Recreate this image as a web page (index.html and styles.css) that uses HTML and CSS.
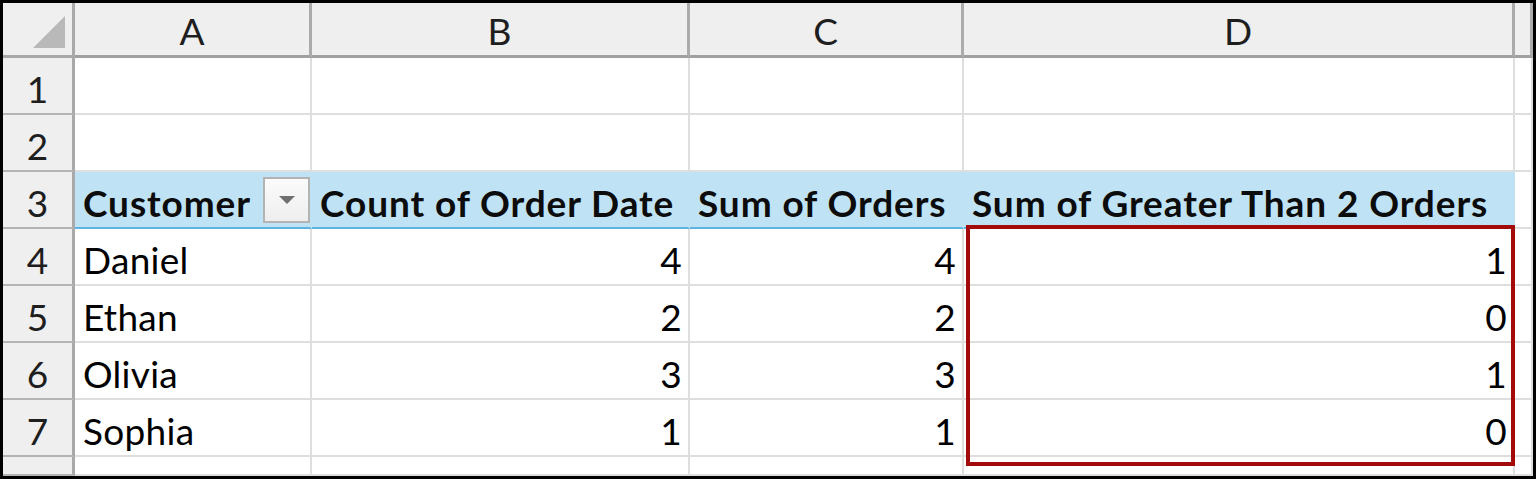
FILE: index.html
```html
<!DOCTYPE html>
<html lang="en">
<head>
    <meta charset="UTF-8">
    <title>Pivot Table - Sum of Greater Than 2 Orders</title>
    <link rel="stylesheet" href="styles.css">
</head>
<body>
    <div class="sheet">
        <div class="grid">
            <!-- column headers -->
            <div class="corner"><span class="corner-tri"></span></div>
            <div class="col-head">A</div>
            <div class="col-head">B</div>
            <div class="col-head">C</div>
            <div class="col-head">D</div>
            <div class="col-head"></div>

            <!-- row 1 -->
            <div class="row-head">1</div>
            <div class="cell"></div><div class="cell"></div><div class="cell"></div><div class="cell"></div><div class="cell"></div>

            <!-- row 2 -->
            <div class="row-head">2</div>
            <div class="cell"></div><div class="cell"></div><div class="cell"></div><div class="cell"></div><div class="cell"></div>

            <!-- row 3: pivot header -->
            <div class="row-head">3</div>
            <div class="cell pivot-head row-label">
                <span>Customer</span>
                <span class="filter-btn"><span class="filter-arrow"></span></span>
            </div>
            <div class="cell pivot-head">Count of Order Date</div>
            <div class="cell pivot-head">Sum of Orders</div>
            <div class="cell pivot-head">Sum of Greater Than 2 Orders</div>
            <div class="cell"></div>

            <!-- data rows -->
            <div class="row-head">4</div>
            <div class="cell">Daniel</div>
            <div class="cell num">4</div>
            <div class="cell num">4</div>
            <div class="cell num">1</div>
            <div class="cell"></div>

            <div class="row-head">5</div>
            <div class="cell">Ethan</div>
            <div class="cell num">2</div>
            <div class="cell num">2</div>
            <div class="cell num">0</div>
            <div class="cell"></div>

            <div class="row-head">6</div>
            <div class="cell">Olivia</div>
            <div class="cell num">3</div>
            <div class="cell num">3</div>
            <div class="cell num">1</div>
            <div class="cell"></div>

            <div class="row-head">7</div>
            <div class="cell">Sophia</div>
            <div class="cell num">1</div>
            <div class="cell num">1</div>
            <div class="cell num">0</div>
            <div class="cell"></div>

            <!-- partial row 8 -->
            <div class="row-head"></div>
            <div class="cell"></div><div class="cell"></div><div class="cell"></div><div class="cell"></div><div class="cell"></div>
        </div>

        <!-- annotation box round column D values -->
        <div class="highlight"></div>
    </div>
</body>
</html>
```

FILE: styles.css
```css
* {
    box-sizing: border-box;
}
body {
    margin: 0;
    background-color: #fff;
    font-family: Lato, "Open Sans", sans-serif;
    color: #000;
}
.sheet {
    position: relative;
    width: 1536px;
    height: 479px;
    border: 3px solid #000;
    overflow: hidden;
}
.grid {
    display: grid;
    grid-template-columns: 72px 237px 378px 274px 551px 1fr;
    grid-template-rows: 55px repeat(7, 57px) 1fr;
    height: 100%;
    font-size: 37px;
}
.corner {
    background-color: #efefef;
    border-right: 3px solid #a9a9a9;
    border-bottom: 3px solid #a9a9a9;
    display: flex;
    align-items: flex-end;
    justify-content: flex-end;
    padding: 0 7px 7px 0;
}
.corner-tri {
    width: 0;
    height: 0;
    border-left: 32px solid transparent;
    border-bottom: 32px solid #b9b9b9;
}
.col-head {
    background-color: #efefef;
    border-right: 3px solid #ababab;
    border-bottom: 3px solid #a0a0a0;
    display: flex;
    align-items: center;
    justify-content: center;
    padding-top: 3px;
    color: #1e1e1e;
}
.row-head {
    background-color: #efefef;
    border-right: 3px solid #a9a9a9;
    border-bottom: 2px solid #b4b4b4;
    display: flex;
    align-items: center;
    justify-content: center;
    padding-top: 6px;
    color: #1e1e1e;
}
.cell {
    border-right: 2px solid #dedede;
    border-bottom: 2px solid #dedede;
    display: flex;
    align-items: center;
    padding: 6px 6px 0 8px;
    white-space: nowrap;
    letter-spacing: 0.3px;
}
.cell.num {
    justify-content: flex-end;
}
.pivot-head {
    background-color: #bfe3f4;
    border-right-color: #bfe3f4;
    border-bottom: 2px solid #5fb3e2;
    font-weight: 700;
    letter-spacing: 0.9px;
    color: #0c0c0c;
}
.pivot-head.row-label {
    justify-content: space-between;
    padding-right: 0;
}
.filter-btn {
    flex: none;
    width: 47px;
    height: 46px;
    margin-top: -6px;
    border: 2px solid #b3b3b3;
    background: linear-gradient(#fbfbfb, #eeeeee);
    display: flex;
    align-items: center;
    justify-content: center;
}
.filter-arrow {
    width: 0;
    height: 0;
    border-left: 8px solid transparent;
    border-right: 8px solid transparent;
    border-top: 8px solid #707070;
}
.highlight {
    position: absolute;
    left: 963px;
    top: 222px;
    width: 549px;
    height: 241px;
    border: 4px solid #a30b0b;
}
```
